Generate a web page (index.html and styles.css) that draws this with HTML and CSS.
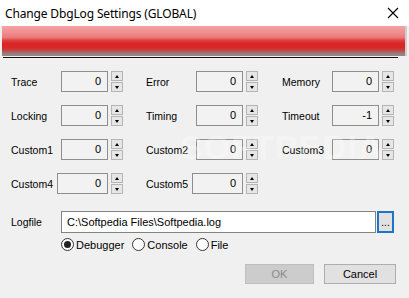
FILE: index.html
```html
<!DOCTYPE html>
<html>
<head>
<meta charset="utf-8">
<link rel="stylesheet" href="styles.css">
</head>
<body>
<div class="window">
  <div class="titlebar">
    <span class="title">Change DbgLog Settings (GLOBAL)</span>
    <svg class="close" width="12" height="12" viewBox="0 0 12 12"><path d="M1 1L11 11M11 1L1 11" stroke="#000" stroke-width="1.1"/></svg>
  </div>
  <div class="banner"></div>
  <div class="rule"></div>
  <div class="content">
    <div class="row">
      <div class="group"><span class="lbl">Trace</span><div class="edit">0</div><div class="spin"><span class="up"></span><span class="dn"></span></div></div>
      <div class="group g2"><span class="lbl">Error</span><div class="edit">0</div><div class="spin"><span class="up"></span><span class="dn"></span></div></div>
      <div class="group g3"><span class="lbl">Memory</span><div class="edit">0</div><div class="spin"><span class="up"></span><span class="dn"></span></div></div>
    </div>
    <div class="row">
      <div class="group"><span class="lbl">Locking</span><div class="edit">0</div><div class="spin"><span class="up"></span><span class="dn"></span></div></div>
      <div class="group g2"><span class="lbl">Timing</span><div class="edit">0</div><div class="spin"><span class="up"></span><span class="dn"></span></div></div>
      <div class="group g3"><span class="lbl">Timeout</span><div class="edit">-1</div><div class="spin"><span class="up"></span><span class="dn"></span></div></div>
    </div>
    <div class="row">
      <div class="group"><span class="lbl">Custom1</span><div class="edit">0</div><div class="spin"><span class="up"></span><span class="dn"></span></div></div>
      <div class="group g2"><span class="lbl">Custom2</span><div class="edit">0</div><div class="spin"><span class="up"></span><span class="dn"></span></div></div>
      <div class="group g3"><span class="lbl">Custom3</span><div class="edit">0</div><div class="spin"><span class="up"></span><span class="dn"></span></div></div>
    </div>
    <div class="row">
      <div class="group"><span class="lbl narrow">Custom4</span><div class="edit wide">0</div><div class="spin"><span class="up"></span><span class="dn"></span></div></div>
      <div class="group g2 c5"><span class="lbl narrow">Custom5</span><div class="edit wide">0</div><div class="spin"><span class="up"></span><span class="dn"></span></div></div>
    </div>
    <div class="logrow">
      <span class="lbl">Logfile</span>
      <div class="pathbox">C:\Softpedia Files\Softpedia.log</div>
      <div class="browse">...</div>
    </div>
    <div class="radios">
      <span class="radio on"></span><span class="rtext">Debugger</span>
      <span class="radio"></span><span class="rtext">Console</span>
      <span class="radio"></span><span class="rtext">File</span>
    </div>
    <div class="buttons">
      <div class="btn disabled">OK</div>
      <div class="btn cancel">Cancel</div>
    </div>
  </div>
  <div class="watermark">SOFTPEDIA</div>
</div>
</body>
</html>
```

FILE: styles.css
```css
html, body {
  margin: 0;
  padding: 0;
  background: #f0f0f0;
}
.window {
  position: relative;
  width: 409px;
  height: 298px;
  overflow: hidden;
  background: #f0f0f0;
  font-family: "Liberation Sans", Arial, sans-serif;
  font-size: 10.5px;
  color: #000;
}
.titlebar {
  height: 26px;
  background: #fff;
  display: flex;
  align-items: center;
  justify-content: space-between;
  padding: 0 10px 0 5px;
  box-sizing: border-box;
}
.title {
  font-family: "Noto Sans", sans-serif;
  font-size: 12px;
  letter-spacing: -0.15px;
  color: #000;
}
.close {
  display: block;
}
.banner {
  margin-left: 2px;
  width: 403px;
  height: 30px;
  border-right: 2px solid #cfcfcf;
  background: linear-gradient(to bottom, #f4a4a4 0%, #f08a8a 25%, #ec7a7a 38%, #e04040 48%, #d82626 58%, #da2828 72%, #c04848 82%, #9a7c7c 92%, #8c8c8c 100%);
}
.rule {
  margin: 1px 0 0 3px;
  width: 395px;
  height: 1px;
  background: #111;
}
.content {
  padding: 13px 0 0 11px;
}
.row {
  display: flex;
  height: 21px;
  margin-bottom: 13px;
}
.row:nth-child(4) {
  margin-bottom: 17px;
}
.group {
  display: flex;
  align-items: center;
  width: 135px;
  flex: none;
}
.group.g2 {
  width: 136px;
}
.lbl {
  width: 50px;
  flex: none;
  font-size: 10.5px;
}
.lbl.narrow {
  width: 46px;
}
.edit {
  width: 47px;
  height: 21px;
  flex: none;
  box-sizing: border-box;
  border: 1px solid #8e8e8e;
  background: #f2f2f2;
  text-align: right;
  padding-right: 6px;
  line-height: 19px;
  font-size: 11px;
}
.edit.wide {
  width: 51px;
}
.spin {
  margin-left: 3px;
  width: 12px;
  height: 21px;
  flex: none;
  display: flex;
  flex-direction: column;
  justify-content: space-between;
}
.spin span {
  position: relative;
  display: block;
  height: 10px;
  box-sizing: border-box;
  border: 1px solid #b5b5b5;
  background: #e6e6e6;
}
.spin .up::after, .spin .dn::after {
  content: "";
  position: absolute;
  left: 2.5px;
  top: 3px;
  border-left: 2.5px solid transparent;
  border-right: 2.5px solid transparent;
}
.spin .up::after {
  border-bottom: 3px solid #000;
}
.spin .dn::after {
  border-top: 3px solid #000;
}
.logrow {
  display: flex;
  align-items: center;
  height: 22px;
}
.pathbox {
  width: 315px;
  height: 22px;
  flex: none;
  box-sizing: border-box;
  border: 1px solid #828282;
  background: #fff;
  padding-left: 5px;
  line-height: 20px;
  font-size: 11px;
}
.browse {
  margin-left: 1px;
  width: 17px;
  height: 22px;
  flex: none;
  box-sizing: border-box;
  border: 2px solid #1e74c6;
  background: #e1e1e1;
  text-align: center;
  line-height: 20px;
  font-size: 10px;
}
.radios {
  display: flex;
  align-items: center;
  margin: 5px 0 0 50px;
  height: 13px;
}
.radio {
  position: relative;
  width: 13px;
  height: 13px;
  box-sizing: border-box;
  border: 1px solid #333;
  border-radius: 50%;
  background: #fff;
  flex: none;
}
.radio.on::after {
  content: "";
  position: absolute;
  left: 2px;
  top: 2px;
  width: 7px;
  height: 7px;
  border-radius: 50%;
  background: #222;
}
.rtext {
  margin: 0 8px 0 2px;
  font-size: 11px;
}
.buttons {
  display: flex;
  margin: 13px 0 0 234px;
  gap: 10px;
}
.btn {
  height: 20px;
  box-sizing: border-box;
  text-align: center;
  line-height: 18px;
  font-size: 11px;
}
.btn.disabled {
  width: 69px;
  background: #cccccc;
  border: 1px solid #bfbfbf;
  color: #8a8a8a;
}
.btn.cancel {
  width: 72px;
  background: #e1e1e1;
  border: 1px solid #adadad;
}
.watermark {
  position: absolute;
  left: 180px;
  top: 128px;
  font-family: "Liberation Sans", sans-serif;
  font-weight: bold;
  font-size: 34px;
  letter-spacing: 1px;
  color: rgba(255, 255, 255, 0.28);
  pointer-events: none;
}
```
